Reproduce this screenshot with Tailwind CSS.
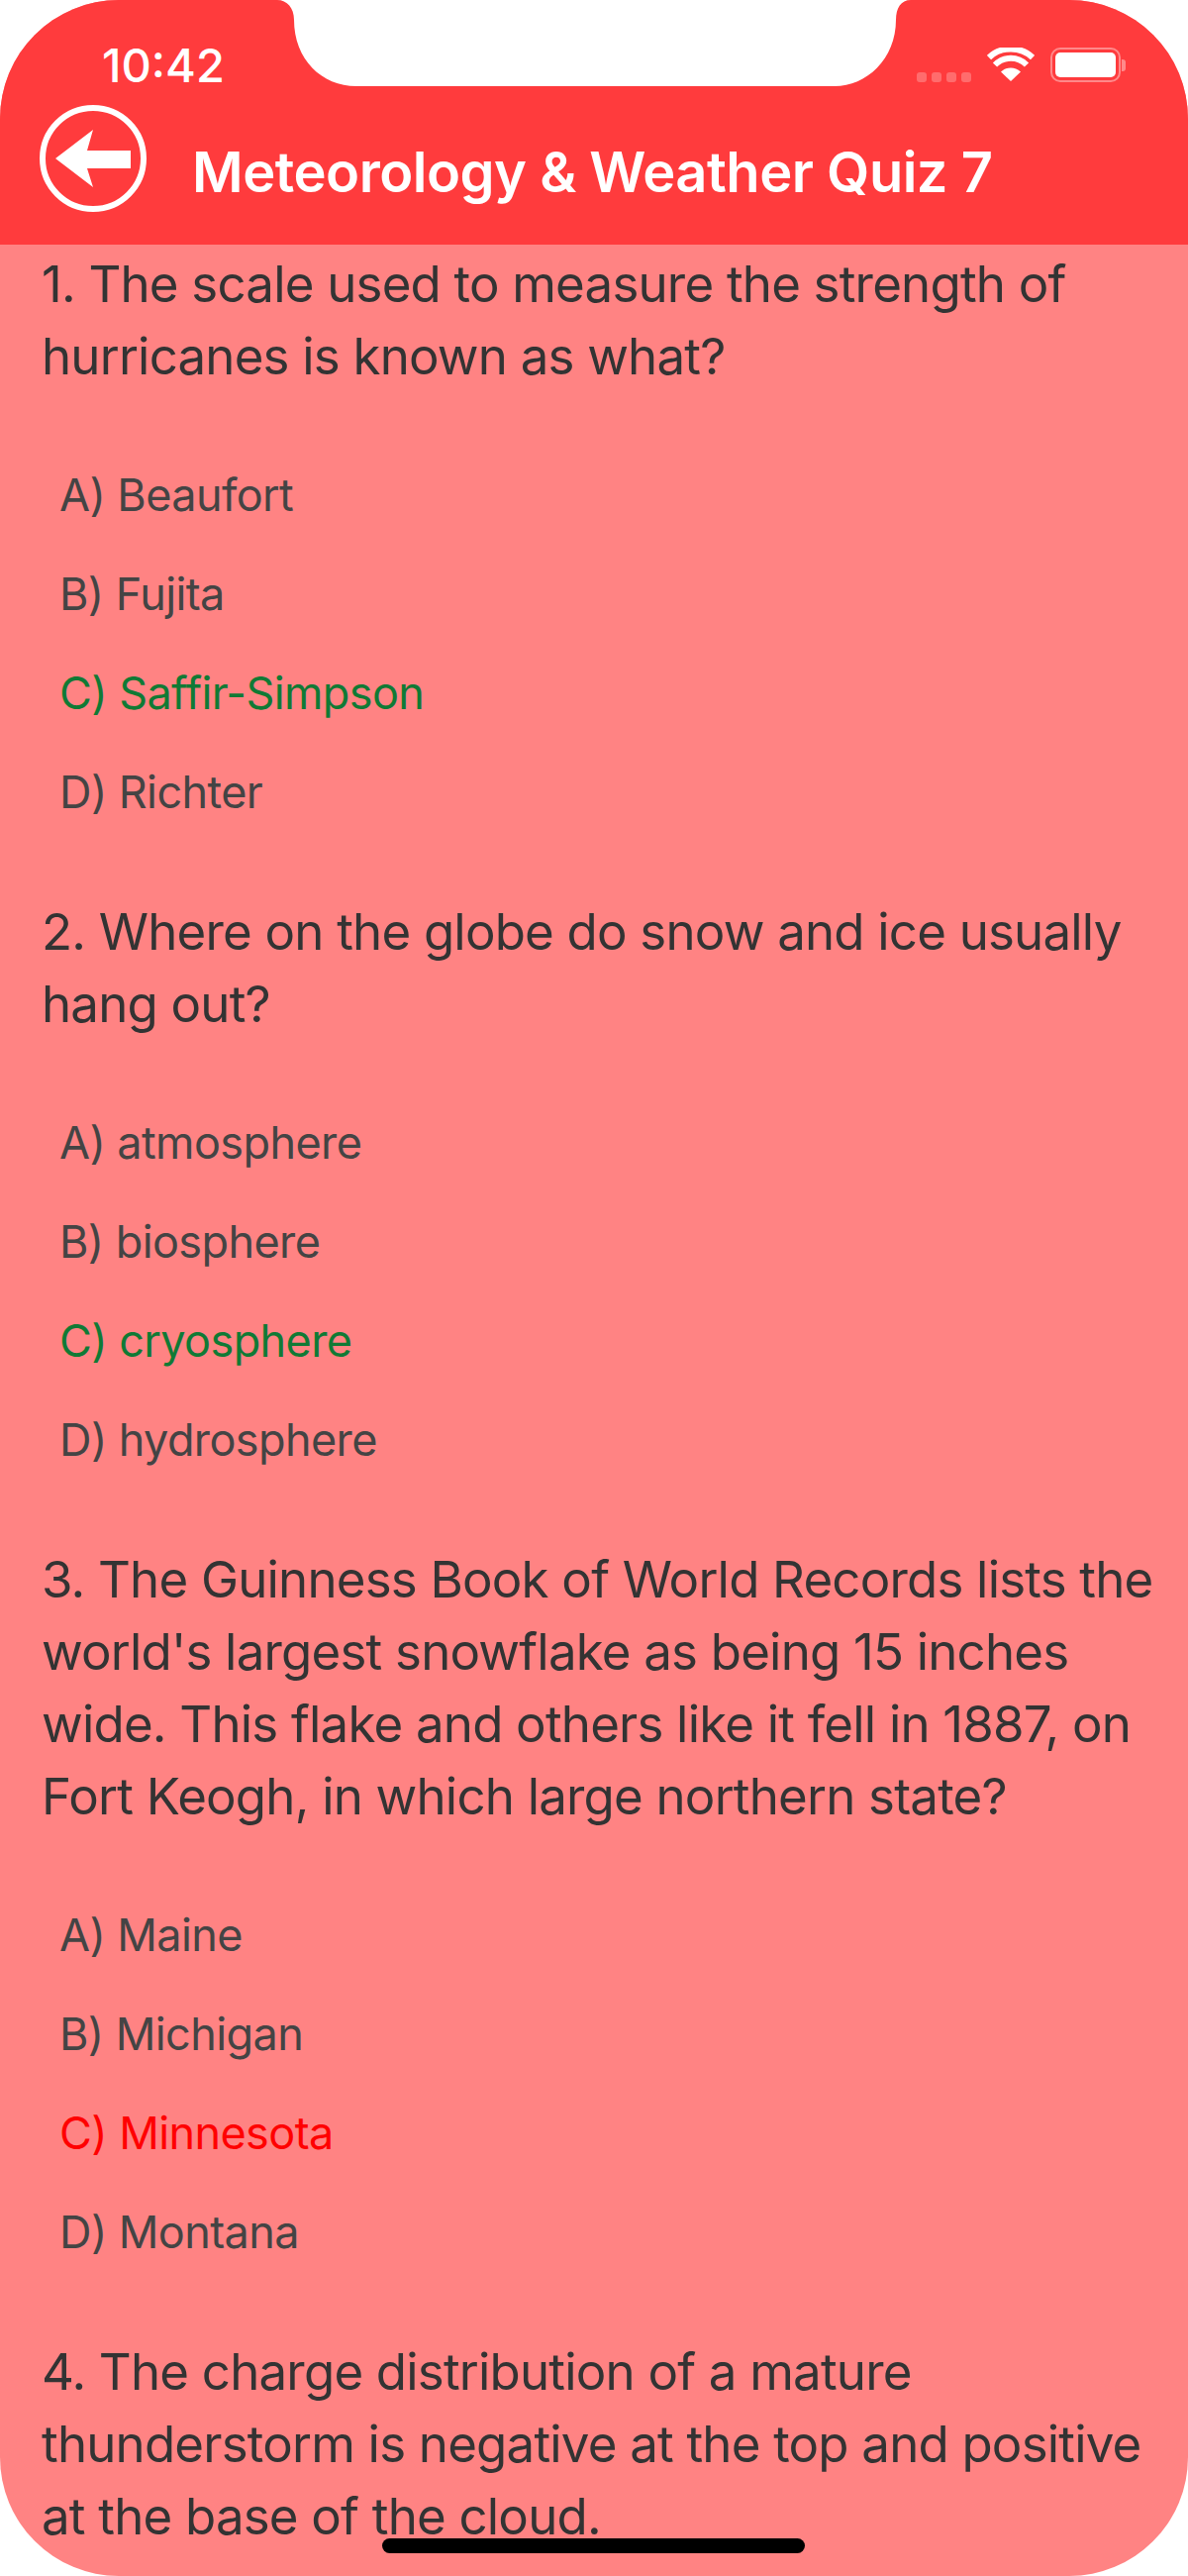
<!DOCTYPE html>
<html lang="en">
  <head>
    <meta charset="UTF-8" />
    <script src="https://cdn.jsdelivr.net/npm/@tailwindcss/browser@4"></script>
    <title>Meteorology &amp; Weather Quiz 7</title>
  </head>
  <body class="bg-white">
    <div class="relative w-[1200px] h-[2601px] overflow-hidden rounded-[120px] bg-[#ff8383] font-['Inter',sans-serif]">
      <!-- Notch -->
      <svg class="absolute top-0 left-[280px] z-10" width="640" height="90" viewBox="0 0 640 90">
        <path d="M0 0 C10 0 17 8 17 20 C17 60 45 87 80 87 L563 87 C595 87 625 60 625 20 C625 8 630 0 640 0 Z" fill="#fff" />
      </svg>

      <!-- Header -->
      <div class="h-[247px] bg-[#ff3b3d] text-white">
        <div class="flex justify-between h-[106px] pl-[103px] pr-[63px]">
          <span class="pt-[41px] text-[47px] leading-[50px] font-medium">10:42</span>
          <div class="flex items-start gap-[16px] pt-[48px]">
            <div class="flex gap-[5px] mt-[25px]">
              <span class="w-[10px] h-[10px] rounded-[3px] bg-white/25"></span>
              <span class="w-[10px] h-[10px] rounded-[3px] bg-white/25"></span>
              <span class="w-[10px] h-[10px] rounded-[3px] bg-white/25"></span>
              <span class="w-[10px] h-[10px] rounded-[3px] bg-white/25"></span>
            </div>
            <svg width="48" height="34" viewBox="0 0 48 34">
              <path d="M24 34 L14 24.5 C20 19 28 19 34 24.5 Z" fill="#fff" />
              <path d="M8 17.5 C17 8.5 31 8.5 40 17.5" fill="none" stroke="#fff" stroke-width="6" />
              <path d="M2 10 C14 -1.5 34 -1.5 46 10" fill="none" stroke="#fff" stroke-width="6" />
            </svg>
            <div class="flex items-center">
              <div class="w-[71px] h-[35px] p-[3px] rounded-[10px] border-[2px] border-white/40">
                <div class="w-full h-full rounded-[5px] bg-white"></div>
              </div>
              <span class="w-[4px] h-[12px] ml-[1px] rounded-r-[3px] bg-white/40"></span>
            </div>
          </div>
        </div>
        <div class="flex items-start pl-[40px]">
          <svg class="shrink-0" width="108" height="108" viewBox="0 0 108 108">
            <circle cx="54" cy="54" r="51" fill="none" stroke="#fff" stroke-width="6" />
            <path d="M16 54 L54 25 L48 46 L92 46 L92 64 L48 64 L54 83 Z" fill="#fff" />
          </svg>
          <h1 class="ml-[46px] mt-[33px] text-[56px] leading-[70px] font-semibold tracking-[-0.5px] whitespace-nowrap">Meteorology &amp; Weather Quiz 7</h1>
        </div>
      </div>

      <!-- Questions -->
      <div class="pt-[3px] pl-[42px] pr-[20px] text-[#333]">
        <section class="pb-[54px]">
          <p class="text-[51px] leading-[73px] tracking-[-0.8px]">1. The scale used to measure the strength of hurricanes is known as what?</p>
          <ul class="mt-[54px] pl-[18px] text-[45px] leading-[100px] tracking-[-0.6px] text-[#444]">
            <li>A) Beaufort</li>
            <li>B) Fujita</li>
            <li class="text-[#107a35]">C) Saffir-Simpson</li>
            <li>D) Richter</li>
          </ul>
        </section>
        <section class="pb-[54px]">
          <p class="text-[51px] leading-[73px] tracking-[-0.8px]">2. Where on the globe do snow and ice usually hang out?</p>
          <ul class="mt-[54px] pl-[18px] text-[45px] leading-[100px] tracking-[-0.6px] text-[#444]">
            <li>A) atmosphere</li>
            <li>B) biosphere</li>
            <li class="text-[#107a35]">C) cryosphere</li>
            <li>D) hydrosphere</li>
          </ul>
        </section>
        <section class="pb-[54px]">
          <p class="text-[51px] leading-[73px] tracking-[-0.8px]">3. The Guinness Book of World Records lists the world's largest snowflake as being 15 inches wide. This flake and others like it fell in 1887, on Fort Keogh, in which large northern state?</p>
          <ul class="mt-[54px] pl-[18px] text-[45px] leading-[100px] tracking-[-0.6px] text-[#444]">
            <li>A) Maine</li>
            <li>B) Michigan</li>
            <li class="text-[#ff0000]">C) Minnesota</li>
            <li>D) Montana</li>
          </ul>
        </section>
        <section>
          <p class="text-[51px] leading-[73px] tracking-[-0.8px]">4. The charge distribution of a mature thunderstorm is negative at the top and positive at the base of the cloud.</p>
        </section>
      </div>

      <!-- Home indicator -->
      <div class="absolute left-[386px] bottom-[23px] w-[427px] h-[15px] rounded-full bg-black"></div>
    </div>
  </body>
</html>
